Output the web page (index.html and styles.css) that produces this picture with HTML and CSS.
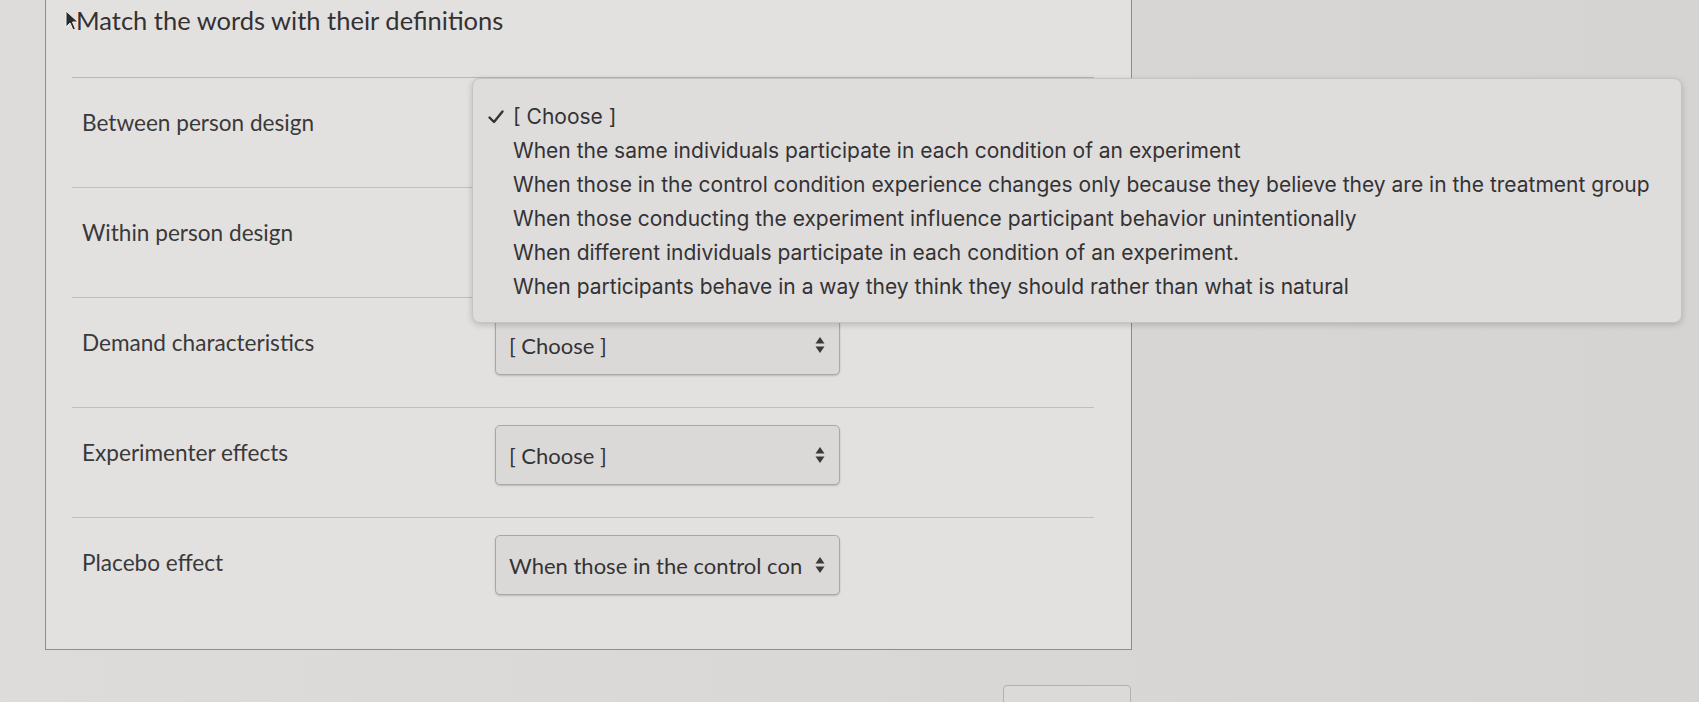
FILE: index.html
```html
<!DOCTYPE html>
<html lang="en">
<head>
<meta charset="utf-8">
<title>Match the words with their definitions</title>
<link rel="stylesheet" href="styles.css">
</head>
<body>
<div class="page">
  <div class="card">
    <div class="title-wrap">
      <svg class="cursor" width="14" height="22" viewBox="0 0 14 22"><path d="M1 1 L1 17 L5 13 L8 20 L10.5 19 L7.5 12 L13 12 Z" fill="#2b2b2b" stroke="#f2f2f2" stroke-width="1"/></svg>
      <h1 class="title">Match the words with their definitions</h1>
    </div>
    <div class="rows">
      <div class="row">
        <div class="term">Between person design</div>
        <div class="select covered"><span class="value">[ Choose ]</span><svg class="arrows" width="10" height="18" viewBox="0 0 10 18"><path d="M5 1 L9.5 7.5 L0.5 7.5 Z M5 17 L9.5 10.5 L0.5 10.5 Z" fill="#3a3a3a"/></svg></div>
      </div>
      <div class="row">
        <div class="term">Within person design</div>
        <div class="select covered"><span class="value">[ Choose ]</span><svg class="arrows" width="10" height="18" viewBox="0 0 10 18"><path d="M5 1 L9.5 7.5 L0.5 7.5 Z M5 17 L9.5 10.5 L0.5 10.5 Z" fill="#3a3a3a"/></svg></div>
      </div>
      <div class="row">
        <div class="term">Demand characteristics</div>
        <div class="select"><span class="value">[ Choose ]</span><svg class="arrows" width="10" height="18" viewBox="0 0 10 18"><path d="M5 1 L9.5 7.5 L0.5 7.5 Z M5 17 L9.5 10.5 L0.5 10.5 Z" fill="#3a3a3a"/></svg></div>
      </div>
      <div class="row">
        <div class="term">Experimenter effects</div>
        <div class="select"><span class="value">[ Choose ]</span><svg class="arrows" width="10" height="18" viewBox="0 0 10 18"><path d="M5 1 L9.5 7.5 L0.5 7.5 Z M5 17 L9.5 10.5 L0.5 10.5 Z" fill="#3a3a3a"/></svg></div>
      </div>
      <div class="row">
        <div class="term">Placebo effect</div>
        <div class="select"><span class="value">When those in the control con</span><svg class="arrows" width="10" height="18" viewBox="0 0 10 18"><path d="M5 1 L9.5 7.5 L0.5 7.5 Z M5 17 L9.5 10.5 L0.5 10.5 Z" fill="#3a3a3a"/></svg></div>
      </div>
    </div>
  </div>
  <div class="button"></div>

  <div class="popup">
    <div class="opt"><span class="check"><svg width="18" height="16" viewBox="0 0 18 16"><path d="M2.5 8.5 L7 13 L15.5 2.5" fill="none" stroke="#343335" stroke-width="2.4" stroke-linecap="round" stroke-linejoin="round"/></svg></span><span>[ Choose ]</span></div>
    <div class="opt"><span class="check"></span><span>When the same individuals participate in each condition of an experiment</span></div>
    <div class="opt"><span class="check"></span><span>When those in the control condition experience changes only because they believe they are in the treatment group</span></div>
    <div class="opt"><span class="check"></span><span>When those conducting the experiment influence participant behavior unintentionally</span></div>
    <div class="opt"><span class="check"></span><span>When different individuals participate in each condition of an experiment.</span></div>
    <div class="opt"><span class="check"></span><span>When participants behave in a way they think they should rather than what is natural</span></div>
  </div>
</div>
</body>
</html>
```
FILE: styles.css
```css
html, body {
  margin: 0;
  padding: 0;
  height: 702px;
  overflow: hidden;
  background: #d9d7d6;
}

.page {
  position: relative;
  display: flow-root;
  width: 1699px;
  height: 702px;
  background: linear-gradient(90deg, #dedcdb 0%, #d9d7d6 60%, #d6d4d3 100%);
}

.card {
  margin-left: 45px;
  margin-top: -20px;
  width: 1087px;
  box-sizing: border-box;
  padding: 24px 37px 21px 26px;
  background: #e3e1e0;
  border: 1px solid #8e8d8d;
}

.title-wrap {
  position: relative;
  border-bottom: 1px solid #b9b7b6;
  padding: 0 0 41px 4px;
}

.cursor {
  position: absolute;
  left: -7px;
  top: 5px;
}

.title {
  margin: 0;
  font-family: Lato, "Liberation Sans", sans-serif;
  font-weight: 400;
  font-size: 25.5px;
  line-height: 31px;
  color: #333233;
}

.row {
  display: flex;
  align-items: flex-start;
  height: 110px;
  box-sizing: border-box;
  border-bottom: 1px solid #c1bfbe;
  padding: 17px 0 0 10px;
}

.row:last-child {
  border-bottom: none;
}

.term {
  width: 413px;
  font-family: Lato, "Liberation Sans", sans-serif;
  font-size: 22.6px;
  line-height: 28px;
  color: #3a393a;
  margin-top: 14px;
}

.select {
  display: flex;
  align-items: center;
  justify-content: space-between;
  width: 345px;
  height: 60px;
  box-sizing: border-box;
  padding: 0 14px 0 13px;
  background: #dbd9d8;
  border: 1px solid #a9a8a8;
  border-radius: 5px;
  box-shadow: 0 1px 2px rgba(0, 0, 0, 0.18);
  font-family: Lato, "Liberation Sans", sans-serif;
  font-size: 22px;
  color: #353435;
}

.select.covered .value {
  visibility: hidden;
}

.value {
  white-space: nowrap;
  overflow: hidden;
}

.arrows {
  flex: none;
  margin-left: 6px;
}

.button {
  margin: 35px 0 0 1003px;
  width: 128px;
  height: 40px;
  box-sizing: border-box;
  border: 1px solid #b2b0b0;
  border-radius: 4px;
  background: #dcdad9;
}

.popup {
  position: absolute;
  left: 472px;
  top: 78px;
  width: 1210px;
  height: 245px;
  box-sizing: border-box;
  padding-top: 21px;
  background: #dfdddc;
  border: 1px solid #c6c4c3;
  border-radius: 8px;
  box-shadow: 0 2px 6px rgba(0, 0, 0, 0.18);
  font-family: Inter, "Liberation Sans", sans-serif;
  font-size: 21px;
  color: #333234;
}

.opt {
  display: grid;
  grid-template-columns: 40px 1fr;
  align-items: center;
  height: 34px;
  line-height: 34px;
  white-space: nowrap;
}

.check {
  display: flex;
  justify-content: flex-end;
  padding-right: 8px;
}
```
